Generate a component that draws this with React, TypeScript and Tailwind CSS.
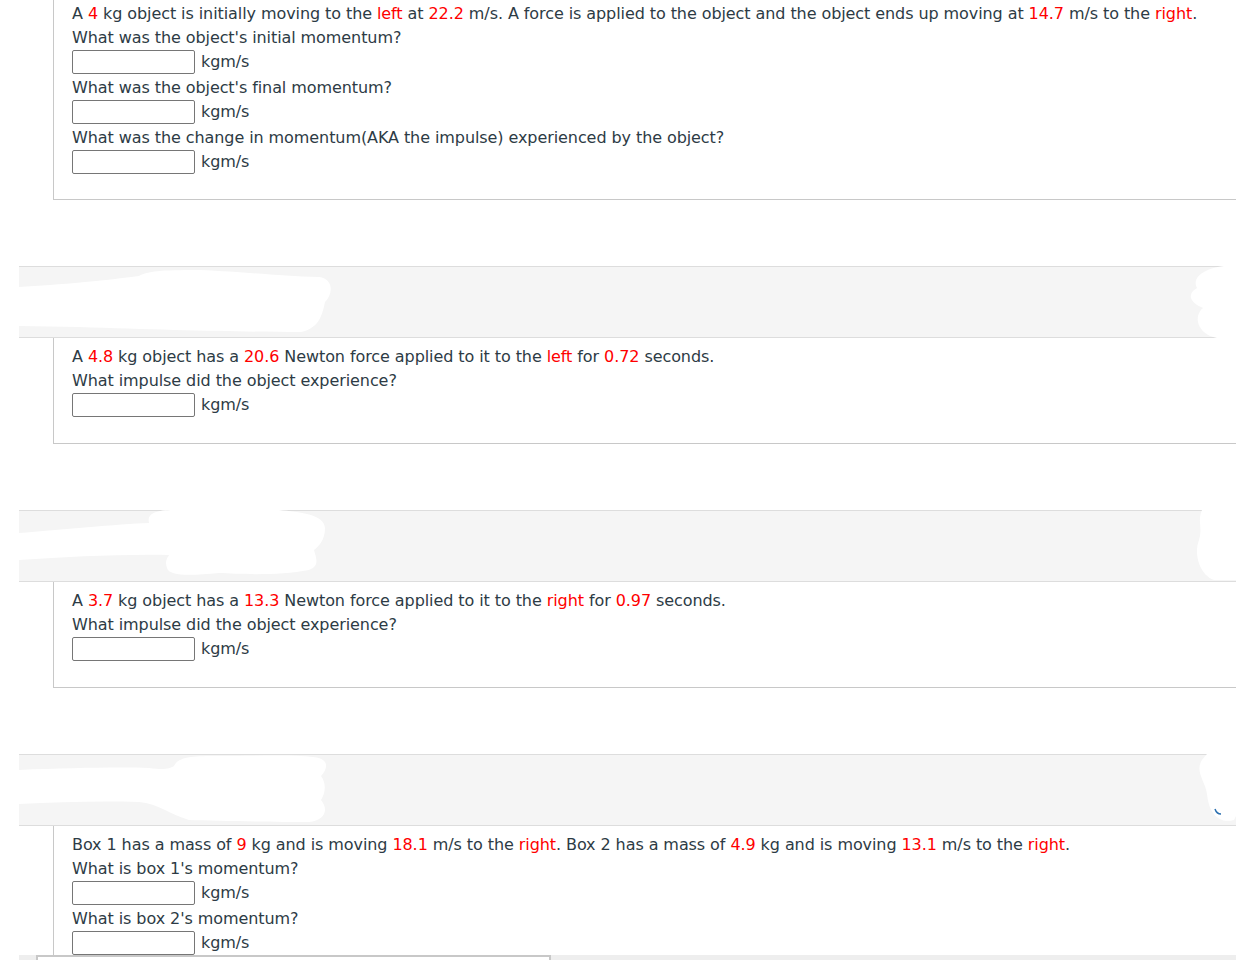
import React from "react";

const R = ({ children }: { children: React.ReactNode }) => (
  <span className="text-[#ff0000]">{children}</span>
);

const Line = ({ children }: { children: React.ReactNode }) => (
  <div className="h-6 leading-6 whitespace-nowrap">
    <span className="relative top-px">{children}</span>
  </div>
);

const Answer = () => (
  <div className="h-[26px] flex items-start">
    <div className="mt-px w-[123px] h-6 border border-[#767676] rounded-[2px] bg-white" />
    <span className="ml-[6px] leading-6 mt-px">kgm/s</span>
  </div>
);

const Panel = ({ children, first }: { children: React.ReactNode; first?: boolean }) => (
  <div className={`ml-[34px] border-l border-b border-[#c8c8c8] pl-[18px] ${first ? "pt-px pb-[24px]" : "pt-[6px] pb-[25px]"}`}>
    {children}
  </div>
);

const Bar = ({ variant }: { variant: number }) => (
  <div className="relative mt-[66px] h-[72px] bg-[#f5f5f5] border-t border-b border-[#dddddd]">
    <svg className="absolute left-0 top-[-1px] w-[1217px] h-[72px]" viewBox="0 0 1217 72" fill="#ffffff">
      {variant === 1 && (
        <>
          <path d="M0 21 C40 19 90 14 120 10 C130 5 140 4 180 4 C230 6 260 10 300 11 C315 13 314 28 306 36 C303 50 300 62 282 66 C230 66 150 64 60 61 L0 60 Z" />
          <path d="M1178 22 C1172 10 1188 2 1205 0 L1217 0 L1217 72 L1198 72 C1178 68 1174 50 1184 42 C1170 36 1168 28 1178 22 Z" />
        </>
      )}
      {variant === 2 && (
        <>
          <path d="M0 23 C40 20 100 14 130 13 C128 4 135 0 155 0 L260 0 C280 2 305 4 306 18 C306 30 300 36 295 40 C298 50 300 56 290 60 C260 66 220 64 200 63 C170 66 150 66 148 58 C145 50 150 46 150 45 C100 44 50 47 0 50 Z" />
          <path d="M1183 0 L1217 0 L1217 70 L1195 70 C1182 66 1174 45 1180 30 C1184 18 1178 10 1183 0 Z" />
        </>
      )}
      {variant === 3 && (
        <>
          <path d="M0 16 C50 14 100 13 130 14 C145 16 150 15 155 12 C160 2 175 2 200 2 C240 2 280 0 300 4 C312 8 306 18 302 22 C308 30 306 40 302 46 C310 56 306 66 290 68 C260 68 200 67 170 66 C150 60 140 50 120 48 C80 47 40 48 0 50 Z" />
          <path d="M1188 0 L1217 0 L1217 62 L1215 66 C1200 70 1190 60 1188 40 C1186 25 1172 15 1188 0 Z" />
          <path d="M1196 55 C1197 58 1199 60 1202 60" stroke="#2a6fb0" strokeWidth="1.5" fill="none" />
        </>
      )}
    </svg>
  </div>
);

export default function App() {
  return (
    <div
      className="bg-white w-[1254px] h-[960px] overflow-hidden text-[16px] tracking-[-0.08px] text-[#2d3b45]"
      style={{ fontFamily: '"DejaVu Sans", Verdana, sans-serif' }}
    >
      <div className="ml-[19px] w-[1217px]">
        <Panel first>
          <Line>
            A <R>4</R> kg object is initially moving to the <R>left</R> at <R>22.2</R> m/s. A force is applied to the object and the object ends up moving at <R>14.7</R> m/s to the <R>right</R>.
          </Line>
          <Line>What was the object's initial momentum?</Line>
          <Answer />
          <Line>What was the object's final momentum?</Line>
          <Answer />
          <Line>What was the change in momentum(AKA the impulse) experienced by the object?</Line>
          <Answer />
        </Panel>
        <Bar variant={1} />
        <Panel>
          <Line>
            A <R>4.8</R> kg object has a <R>20.6</R> Newton force applied to it to the <R>left</R> for <R>0.72</R> seconds.
          </Line>
          <Line>What impulse did the object experience?</Line>
          <Answer />
        </Panel>
        <Bar variant={2} />
        <Panel>
          <Line>
            A <R>3.7</R> kg object has a <R>13.3</R> Newton force applied to it to the <R>right</R> for <R>0.97</R> seconds.
          </Line>
          <Line>What impulse did the object experience?</Line>
          <Answer />
        </Panel>
        <Bar variant={3} />
        <div className="ml-[34px] border-l border-[#c8c8c8] pl-[18px] pt-[6px] h-[129px]">
          <Line>
            Box 1 has a mass of <R>9</R> kg and is moving <R>18.1</R> m/s to the <R>right</R>. Box 2 has a mass of <R>4.9</R> kg and is moving <R>13.1</R> m/s to the <R>right</R>.
          </Line>
          <Line>What is box 1's momentum?</Line>
          <Answer />
          <Line>What is box 2's momentum?</Line>
          <Answer />
        </div>
        <div className="h-[20px] bg-[#eeeeee] pl-[17px]">
          <div className="w-[515px] h-full bg-white border-t-2 border-l-2 border-r-2 border-[#c8c8c8]" />
        </div>
      </div>
    </div>
  );
}
